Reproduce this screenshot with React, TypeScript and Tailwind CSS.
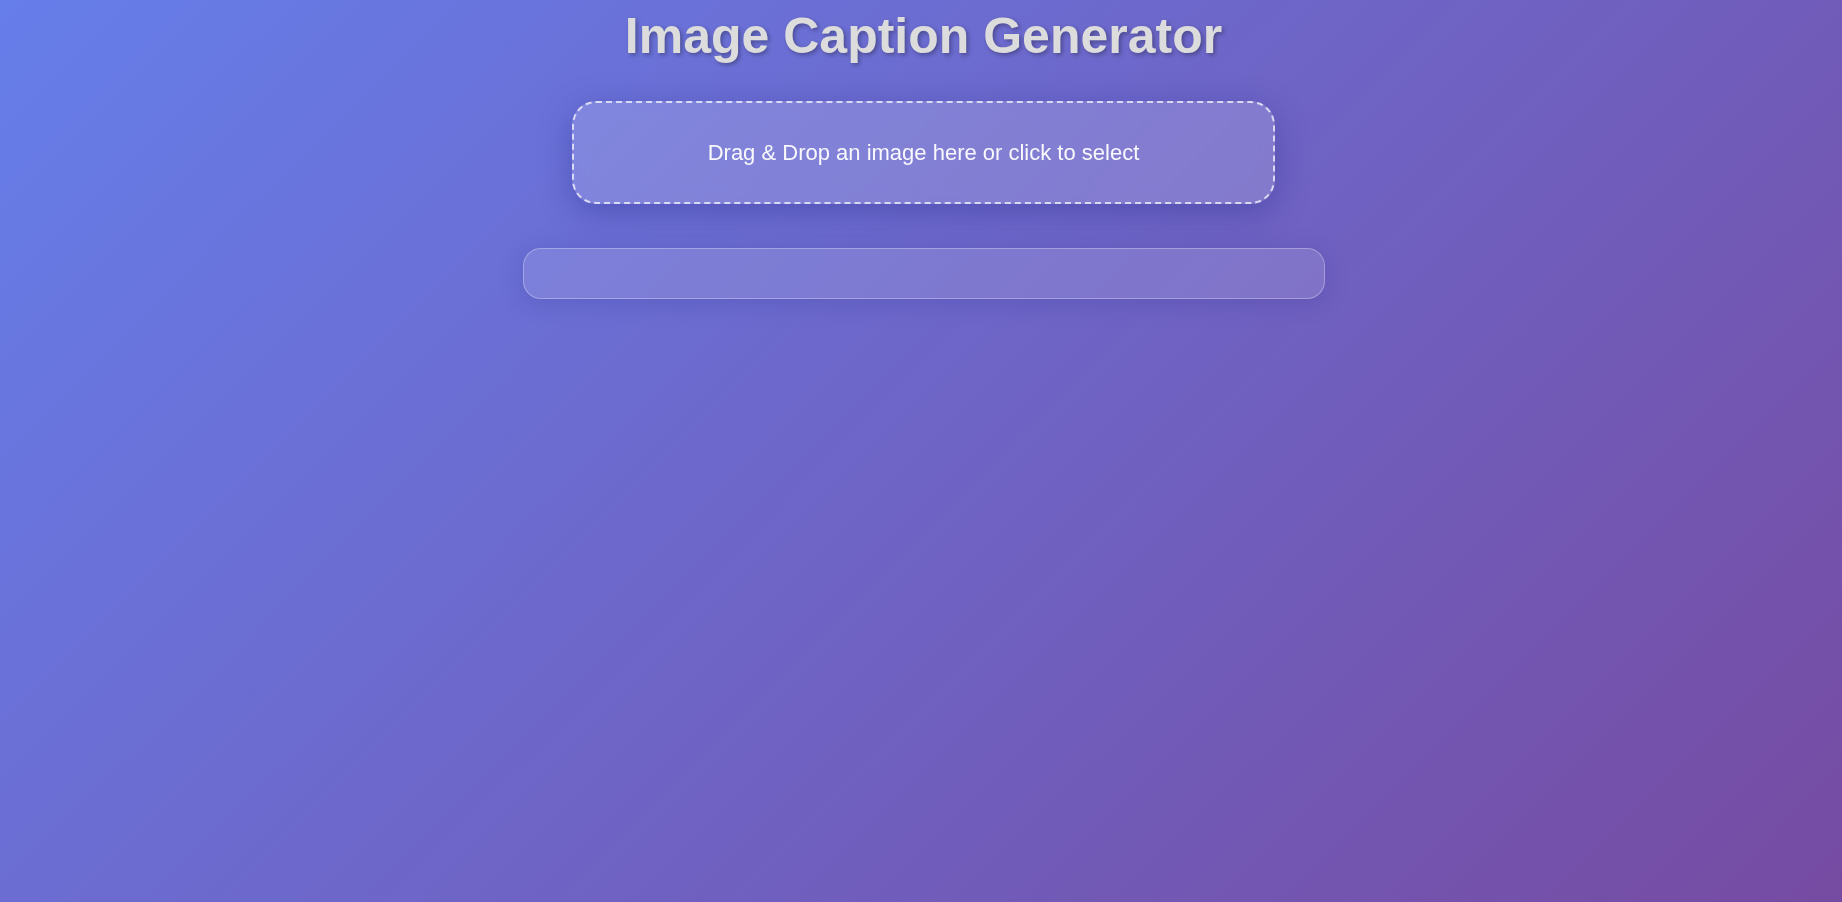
import { useRef, useState } from 'react'

export default function App() {
  const inputRef = useRef<HTMLInputElement>(null)
  const [caption, setCaption] = useState('')

  function handleFiles(files: FileList | null) {
    const file = files?.[0]
    if (!file) return
    setCaption(`Selected: ${file.name}`)
  }

  return (
    <main className="min-h-screen w-full bg-[linear-gradient(135deg,#667eea_0%,#764ba2_100%)] font-['Liberation_Sans',Arial,sans-serif]">
      <div className="flex flex-col items-center pl-[5px] pt-[11px]">
        <h1 className="text-[50px] font-bold leading-none text-[#dcdcdc] [text-shadow:2px_2px_4px_rgba(0,0,0,0.3)]">
          Image Caption Generator
        </h1>

        <div
          role="button"
          onClick={() => inputRef.current?.click()}
          onDragOver={(e) => e.preventDefault()}
          onDrop={(e) => {
            e.preventDefault()
            handleFiles(e.dataTransfer.files)
          }}
          className="mt-[40px] flex h-[103px] w-[703px] cursor-pointer items-center justify-center rounded-[24px] border-2 border-dashed border-white/70 bg-white/15 shadow-[0_8px_32px_rgba(31,38,135,0.35)] backdrop-blur-sm"
        >
          <p className="text-[22px] text-white/95">
            Drag &amp; Drop an image here or click to select
          </p>
          <input
            ref={inputRef}
            type="file"
            accept="image/*"
            className="hidden"
            onChange={(e) => handleFiles(e.target.files)}
          />
        </div>

        <div className="mt-[44px] flex h-[51px] w-[802px] items-center justify-center rounded-[18px] border border-white/30 bg-white/12 text-lg text-white shadow-[0_4px_24px_rgba(31,38,135,0.2)]">
          {caption}
        </div>
      </div>
    </main>
  )
}
